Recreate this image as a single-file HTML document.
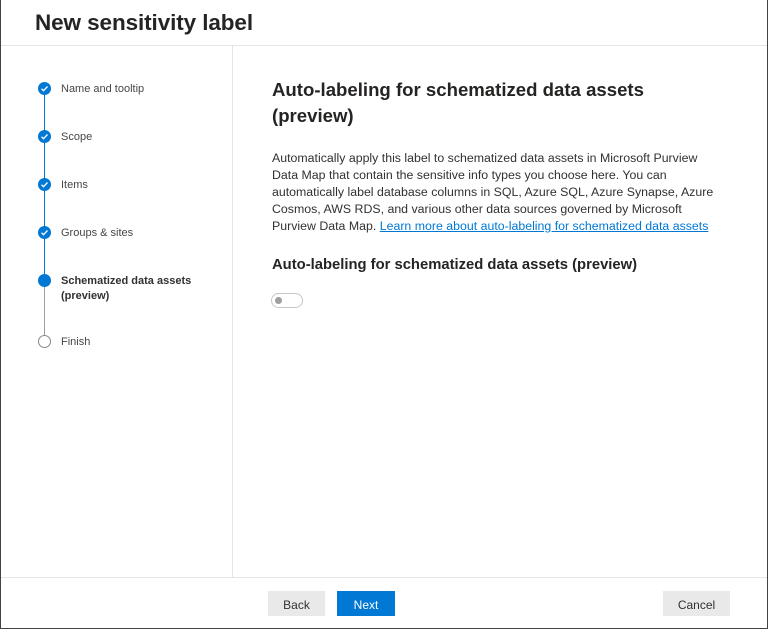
<!DOCTYPE html>
<html><head><meta charset="utf-8"><style>
*{margin:0;padding:0;box-sizing:border-box}
body{width:768px;height:629px;background:#fff;font-family:"Liberation Sans",sans-serif;color:#323130;position:relative;overflow:hidden}
.frame{position:absolute;left:0;top:0;width:768px;height:629px;border:1px solid #444;border-top:none}
.hdr{position:absolute;left:0;top:0;width:768px;height:46px;border-bottom:1px solid #e5e5e5}
.hdr h1{position:absolute;left:35px;top:10px;font-size:22.5px;font-weight:bold;color:#252423;letter-spacing:-0.1px}
.side{position:absolute;left:232px;top:46px;width:1px;height:531px;background:#e5e5e5}
.foot{position:absolute;left:0;top:577px;width:768px;height:1px;background:#e5e5e5}
.c{position:absolute;left:38px;width:13px;height:13px;border-radius:50%;background:#0078d4}
.c svg{position:absolute;left:2px;top:2px}
.ln{position:absolute;left:44px;width:1px;background:#0078d4}
.st{position:absolute;left:61px;font-size:11px;color:#484644}
.b{position:absolute;height:25px;top:591px;font-size:12px;text-align:center;line-height:28px;background:#e9e9e9;color:#323130}
h2{position:absolute;left:272px;top:77px;font-size:18.6px;line-height:26px;font-weight:bold;color:#252423}
.p{position:absolute;left:272px;top:150px;font-size:12.35px;line-height:17px;white-space:nowrap;color:#323130}
.p a{color:#0078d4;text-decoration:underline}
h3{position:absolute;left:272px;top:257px;font-size:14.8px;font-weight:bold;color:#252423}
.tg{position:absolute;left:271px;top:293px;width:32px;height:15px;border:1px solid #c8c6c4;border-radius:8px}
.tg i{position:absolute;left:3px;top:3px;width:7px;height:7px;border-radius:50%;background:#a19f9d}
</style></head><body>
<div class="hdr"><h1>New sensitivity label</h1></div>
<div class="side"></div>
<div class="foot"></div>
<div class="ln" style="top:94px;height:186px"></div>
<div class="ln" style="top:286px;height:55px;background:#a19f9d"></div>
<div class="c" style="top:82px"><svg width="9" height="9" viewBox="0 0 9 9"><path d="M1.5 4.7l2 2 4-4.2" stroke="#fff" stroke-width="1.3" fill="none"/></svg></div>
<div class="c" style="top:130px"><svg width="9" height="9" viewBox="0 0 9 9"><path d="M1.5 4.7l2 2 4-4.2" stroke="#fff" stroke-width="1.3" fill="none"/></svg></div>
<div class="c" style="top:178px"><svg width="9" height="9" viewBox="0 0 9 9"><path d="M1.5 4.7l2 2 4-4.2" stroke="#fff" stroke-width="1.3" fill="none"/></svg></div>
<div class="c" style="top:226px"><svg width="9" height="9" viewBox="0 0 9 9"><path d="M1.5 4.7l2 2 4-4.2" stroke="#fff" stroke-width="1.3" fill="none"/></svg></div>
<div class="c" style="top:274px"></div>
<div class="c" style="top:335px;background:#fff;border:1.5px solid #8a8886"></div>
<div class="st" style="top:83px">Name and tooltip</div>
<div class="st" style="top:131px">Scope</div>
<div class="st" style="top:179px">Items</div>
<div class="st" style="top:227px">Groups &amp; sites</div>
<div class="st" style="top:274px;font-weight:bold;color:#323130;line-height:15px">Schematized data assets<br>(preview)</div>
<div class="st" style="top:336px">Finish</div>
<h2>Auto-labeling for schematized data assets<br>(preview)</h2>
<div class="p">Automatically apply this label to schematized data assets in Microsoft Purview<br>Data Map that contain the sensitive info types you choose here. You can<br>automatically label database columns in SQL, Azure SQL, Azure Synapse, Azure<br>Cosmos, AWS RDS, and various other data sources governed by Microsoft<br>Purview Data Map. <a>Learn more about auto-labeling for schematized data assets</a></div>
<h3>Auto-labeling for schematized data assets (preview)</h3>
<div class="tg"><i></i></div>
<div class="b" style="left:268px;width:57px">Back</div>
<div class="b" style="left:337px;width:58px;background:#0078d4;color:#fff">Next</div>
<div class="b" style="left:663px;width:67px">Cancel</div>
<div class="frame"></div>
</body></html>
